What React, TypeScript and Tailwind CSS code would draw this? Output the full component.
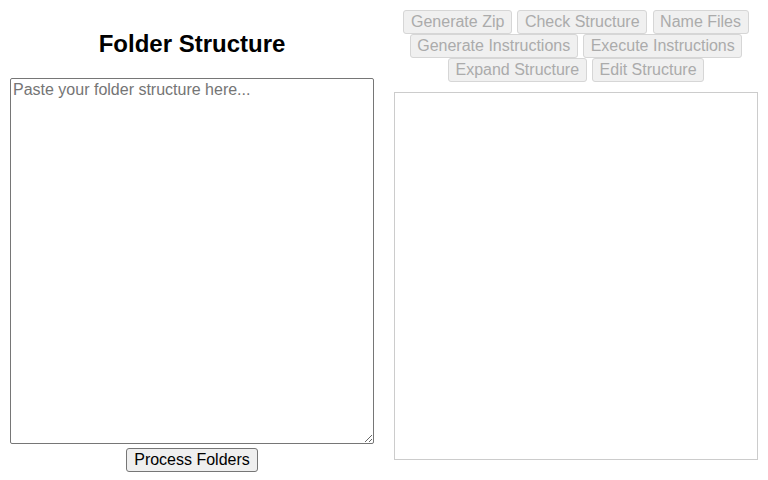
import React from "react";

const btns = [
  "Generate Zip",
  "Check Structure",
  "Name Files",
  "Generate Instructions",
  "Execute Instructions",
  "Expand Structure",
  "Edit Structure",
];

export default function App() {
  return (
    <div
      className="flex w-[768px] h-[480px] bg-white text-black overflow-hidden"
      style={{ fontFamily: '"Liberation Sans", Arial, sans-serif' }}
    >
      <div className="flex-1 p-[10px] flex flex-col items-center">
        <h2 className="shrink-0 text-[24px] font-bold leading-[28px] mt-[20px] mb-[20px]">
          Folder Structure
        </h2>
        <textarea
          className="w-[364px] h-[366px] shrink-0 border border-[#767676] rounded-[2px] px-[2px] py-[1px] text-[16px] leading-[19px] placeholder:text-[#757575] outline-none"
          placeholder="Paste your folder structure here..."
        />
        <button className="shrink-0 mt-[4px] h-[24px] px-[7px] text-[16px] leading-[18px] bg-[#efefef] border border-[#767676] rounded-[3px] text-black">
          Process Folders
        </button>
      </div>
      <div className="flex-1 p-[10px] flex flex-col">
        <div className="flex flex-wrap justify-center gap-x-[5.5px] px-[4px]">
          {btns.map((b) => (
            <button
              key={b}
              disabled
              className="h-[24px] px-[6.5px] text-[16px] leading-[18px] bg-[#f0f0f0] border border-[#d6d6d6] rounded-[3px] text-[#ababab]"
            >
              {b}
            </button>
          ))}
        </div>
        <div className="shrink-0 mt-[10px] w-[364px] h-[368px] border border-[#cccccc]" />
      </div>
    </div>
  );
}
